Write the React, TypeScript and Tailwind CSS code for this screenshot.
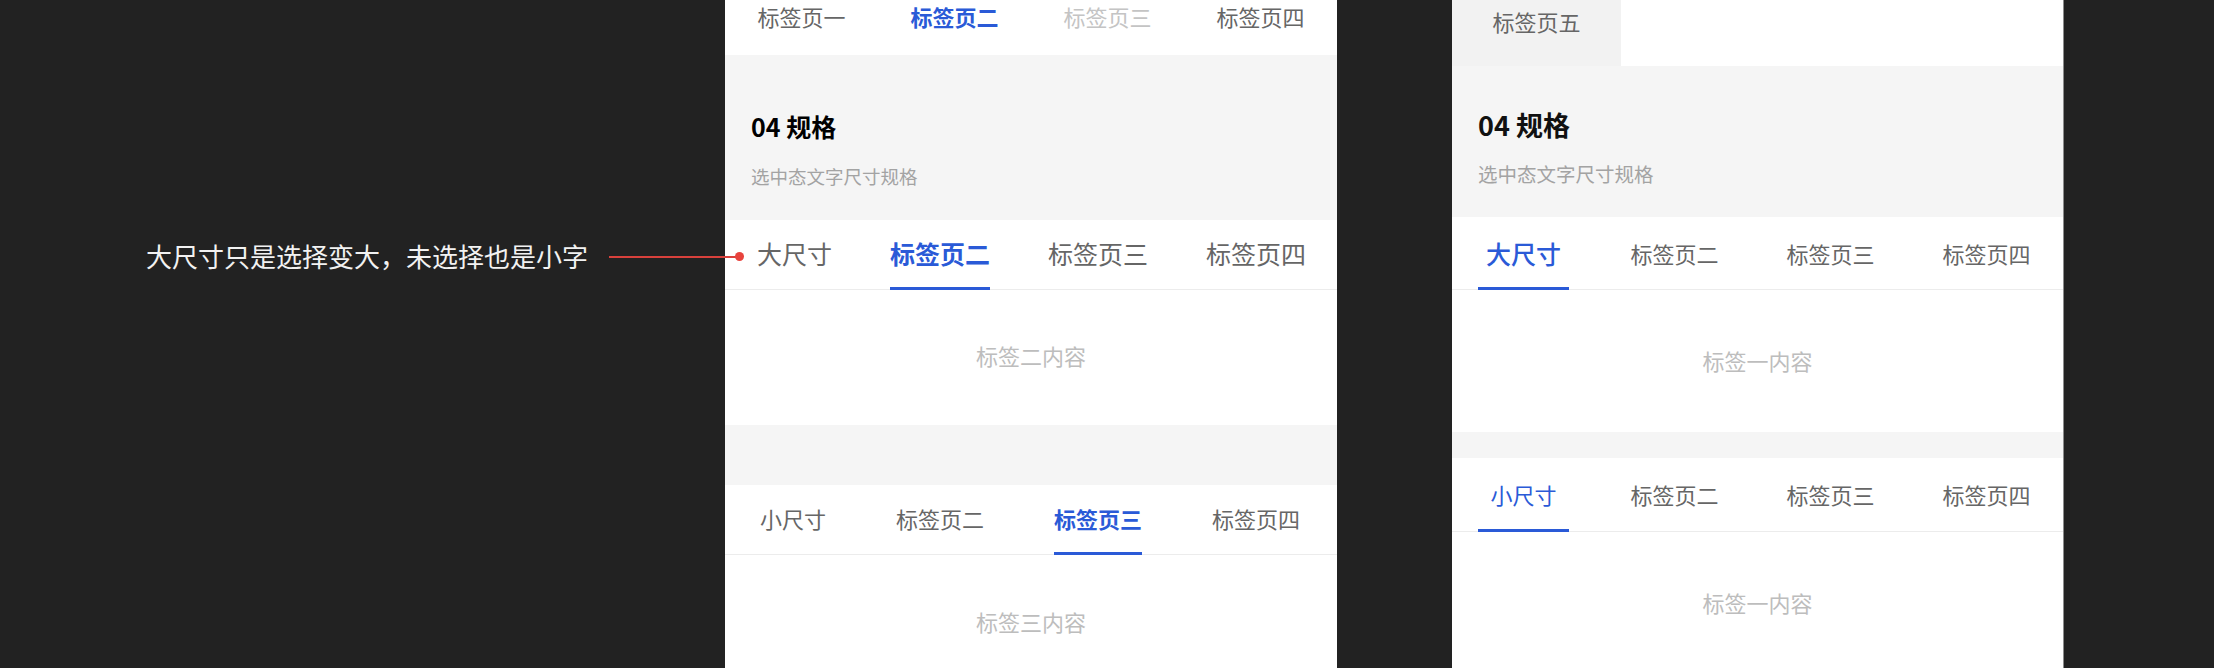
import React from "react";

const BLUE = "text-[#2a5ad7]";

function LeftPanel() {
  return (
    <div className="w-[612px] h-[668px] shrink-0 bg-white overflow-hidden flex flex-col">
      {/* top tab bar (cut) */}
      <div className="h-[55px] shrink-0 flex items-start pt-[5px] text-[22px] leading-[22px]">
        <div className="flex-1 text-center text-[#666]">标签页一</div>
        <div className={`flex-1 text-center font-bold ${BLUE}`}>标签页二</div>
        <div className="flex-1 text-center text-[#c4c4c4]">标签页三</div>
        <div className="flex-1 text-center text-[#666]">标签页四</div>
      </div>
      {/* gray section */}
      <div className="h-[165px] shrink-0 bg-[#f5f5f5] flex flex-col pl-[26px] pt-[59px]">
        <div className="text-[25px] leading-[24px] font-bold text-black">04 规格</div>
        <div className="mt-[29px] text-[18.5px] leading-[19px] text-[#a3a3a3]">选中态文字尺寸规格</div>
      </div>
      {/* large tab bar */}
      <div className="h-[70px] shrink-0 flex items-center pl-[32px] pb-[2px] gap-[58px] border-b border-[#ececec] text-[25px] leading-[25px]">
        <div className="relative h-full flex items-center text-[#666]">大尺寸</div>
        <div className={`relative h-full flex items-center font-bold ${BLUE}`}>
          标签页二
          <div className="absolute left-0 right-0 bottom-[-3px] h-[3px] bg-[#2a5ad7]" />
        </div>
        <div className="relative h-full flex items-center text-[#666]">标签页三</div>
        <div className="relative h-full flex items-center text-[#666]">标签页四</div>
      </div>
      <div className="h-[135px] shrink-0 flex items-center justify-center pb-[5px] text-[22px] leading-[22px] text-[#bdbdbd]">
        标签二内容
      </div>
      <div className="h-[60px] shrink-0 bg-[#f5f5f5]" />
      {/* small tab bar */}
      <div className="h-[70px] shrink-0 flex items-center pl-[35px] pb-[4px] gap-[70px] border-b border-[#ececec] text-[22px] leading-[22px]">
        <div className="relative h-full flex items-center text-[#666]">小尺寸</div>
        <div className="relative h-full flex items-center text-[#666]">标签页二</div>
        <div className={`relative h-full flex items-center font-bold ${BLUE}`}>
          标签页三
          <div className="absolute left-0 right-0 bottom-[-5px] h-[3px] bg-[#2a5ad7]" />
        </div>
        <div className="relative h-full flex items-center text-[#666]">标签页四</div>
      </div>
      <div className="h-[135px] shrink-0 flex items-center justify-center pb-[4px] text-[22px] leading-[22px] text-[#bdbdbd]">
        标签三内容
      </div>
    </div>
  );
}

function RightTabs({ first, large }: { first: string; large: boolean }) {
  return (
    <div
      className={`shrink-0 flex items-stretch pl-[26px] border-b border-[#ececec] text-[22px] leading-[22px] ${
        large ? "h-[73px]" : "h-[74px]"
      }`}
    >
      <div
        className={`relative w-[91px] flex items-center justify-center ${BLUE} ${
          large ? "pt-[1px] text-[25px] leading-[25px] font-medium" : "pb-[1px]"
        }`}
      >
        {first}
        <div className="absolute left-0 right-0 bottom-[-1px] h-[3px] bg-[#2a5ad7]" />
      </div>
      <div className="ml-[60px] w-[91px] flex items-center justify-center pb-[1px] text-[#666]">标签页二</div>
      <div className="ml-[65px] w-[91px] flex items-center justify-center pb-[1px] text-[#666]">标签页三</div>
      <div className="ml-[65px] w-[91px] flex items-center justify-center pb-[1px] text-[#666]">标签页四</div>
    </div>
  );
}

function RightPanel() {
  return (
    <div className="w-[612px] h-[668px] shrink-0 bg-white overflow-hidden flex flex-col border-r border-[#8c8c8c]">
      <div className="h-[66px] shrink-0 flex">
        <div className="w-[169px] h-full bg-[#f2f2f2] flex justify-center pt-[10px] text-[22px] leading-[22px] text-[#666]">
          标签页五
        </div>
      </div>
      <div className="h-[151px] shrink-0 bg-[#f5f5f5] flex flex-col pl-[26px] pt-[46px]">
        <div className="text-[27px] leading-[26px] font-bold text-[#111]">04 规格</div>
        <div className="mt-[26px] text-[19.5px] leading-[19px] text-[#a3a3a3]">选中态文字尺寸规格</div>
      </div>
      <RightTabs first="大尺寸" large />
      <div className="h-[142px] shrink-0 flex items-center justify-center pb-[3px] text-[22px] leading-[22px] text-[#bdbdbd]">
        标签一内容
      </div>
      <div className="h-[26px] shrink-0 bg-[#f5f5f5]" />
      <RightTabs first="小尺寸" large={false} />
      <div className="h-[142px] shrink-0 flex items-center justify-center pb-[2px] text-[22px] leading-[22px] text-[#bdbdbd]">
        标签一内容
      </div>
    </div>
  );
}

export default function App() {
  return (
    <div className="relative w-[2214px] h-[668px] bg-[#222222] overflow-hidden flex font-['Noto_Sans_CJK_SC',sans-serif]">
      <div className="w-[725px] shrink-0 flex flex-col pl-[146px] pt-[243px]">
        <div className="text-[26px] leading-[26px] text-[#f2f2f2]">大尺寸只是选择变大，未选择也是小字</div>
      </div>
      <LeftPanel />
      <div className="w-[115px] shrink-0" />
      <RightPanel />
      {/* annotation connector */}
      <div className="absolute left-[609px] top-[256px] w-[128px] h-[1.5px] bg-[#d9413c]" />
      <div className="absolute left-[735px] top-[252px] w-[9px] h-[9px] rounded-full bg-[#e8433d]" />
    </div>
  );
}
